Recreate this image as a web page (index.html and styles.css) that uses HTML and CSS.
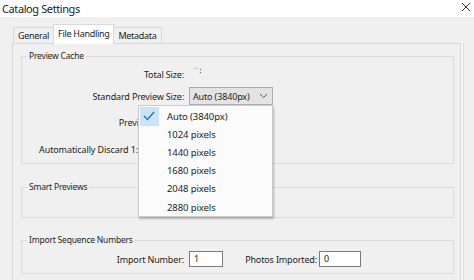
FILE: index.html
```html
<!DOCTYPE html>
<html>
<head>
<meta charset="utf-8">
<link rel="stylesheet" href="styles.css">
</head>
<body>
<div class="window">
  <div class="titlebar">
    <span class="title">Catalog Settings</span>
    <svg class="close" width="10" height="10" viewBox="0 0 10 10"><path d="M1 1 L9 9 M9 1 L1 9" stroke="#333" stroke-width="1" fill="none"/></svg>
  </div>
  <div class="tabs">
    <div class="tab">General</div>
    <div class="tab active">File Handling</div>
    <div class="tab">Metadata</div>
  </div>
  <div class="panel">
    <fieldset class="group cache">
      <legend>Preview Cache</legend>
      <div class="row r1">
        <span class="label">Total Size:</span>
        <svg class="spinner" width="10" height="8" viewBox="0 0 10 8"><circle cx="1.5" cy="1.5" r="0.7" fill="#999"/><circle cx="4" cy="1" r="0.6" fill="#bbb"/><circle cx="6.5" cy="2.5" r="0.7" fill="#777"/><circle cx="6.5" cy="5.5" r="0.7" fill="#777"/></svg>
      </div>
      <div class="row r2">
        <span class="label">Standard Preview Size:</span>
        <div class="selectwrap">
          <div class="select">
            <span>Auto (3840px)</span>
            <svg class="chev" width="9" height="6" viewBox="0 0 9 6"><path d="M1 1 L4.5 4.5 L8 1" stroke="#555" stroke-width="1" fill="none"/></svg>
          </div>
          <div class="menu">
            <div class="item checked">
              <span class="check"><svg width="19" height="19" viewBox="0 0 19 19"><path d="M4 9 L7.5 12.5 L14 5" stroke="#1f73c8" stroke-width="1.4" fill="none"/></svg></span>
              <span>Auto (3840px)</span>
            </div>
            <div class="item"><span class="check"></span><span>1024 pixels</span></div>
            <div class="item"><span class="check"></span><span>1440 pixels</span></div>
            <div class="item"><span class="check"></span><span>1680 pixels</span></div>
            <div class="item"><span class="check"></span><span>2048 pixels</span></div>
            <div class="item"><span class="check"></span><span>2880 pixels</span></div>
          </div>
        </div>
      </div>
      <div class="row r3">
        <span class="label">Preview Quality:</span>
      </div>
      <div class="row r4">
        <span class="label">Automatically Discard 1:1 Previews:</span>
      </div>
    </fieldset>
    <fieldset class="group smart">
      <legend>Smart Previews</legend>
      <div class="empty"></div>
    </fieldset>
    <fieldset class="group seq">
      <legend>Import Sequence Numbers</legend>
      <div class="row r5">
        <span class="label">Import Number:</span>
        <div class="input num">1</div>
        <span class="label2">Photos Imported:</span>
        <div class="input photos">0</div>
      </div>
    </fieldset>
  </div>
</div>
</body>
</html>
```

FILE: styles.css
```css
* { box-sizing: border-box; }
html, body { margin: 0; padding: 0; }
body {
  width: 474px;
  height: 280px;
  overflow: hidden;
  background: #f0f0f0;
  font-family: "Noto Sans", "Open Sans", sans-serif;
  font-size: 9px;
  letter-spacing: -0.15px;
  color: #1e1e1e;
}
.window { width: 474px; height: 280px; }
.titlebar {
  height: 17px;
  background: #ffffff;
  display: flex;
  justify-content: space-between;
  align-items: center;
  padding: 0 3px 0 2px;
}
.title { font-size: 11px; color: #222; line-height: 17px; letter-spacing: -0.4px; }
.close { margin-top: -3px; }
.tabs {
  height: 26px;
  display: flex;
  align-items: flex-end;
  padding-left: 13px;
}
.tab {
  height: 16px;
  line-height: 15px;
  padding: 0 4px;
  border: 1px solid #d9d9d9;
  border-bottom: none;
  background: #f0f0f0;
  letter-spacing: -0.3px;
}
.tab + .tab { margin-left: -1px; }
.tab.active {
  height: 20px;
  line-height: 17px;
  background: #ffffff;
  position: relative;
  z-index: 1;
  margin-bottom: -1px;
  padding: 0 4px;
}
.panel {
  margin-left: 12px;
  width: 449px;
  height: 240px;
  border: 1px solid #d9d9d9;
  background: #f0f0f0;
  padding: 6px 6px 0 8px;
  box-shadow: 2px 0 0 #f7f7f7, 3px 0 0 #dedede;
}
.group {
  margin: 0;
  border: 1px solid #dcdcdc;
  padding: 0;
  min-width: 0;
}
.group legend {
  margin-left: 5px;
  padding: 0 2px;
  line-height: 12px;
  height: 12px;
  font-size: 8.5px;
  letter-spacing: -0.2px;
}
.cache { height: 114px; padding-top: 3px; }
.smart { margin-top: 17px; height: 37px; }
.seq { margin-top: 16px; height: 40px; padding-top: 4px; }
.row {
  display: flex;
  align-items: center;
  height: 18px;
}
.label {
  width: 162px;
  text-align: right;
  flex: none;
  white-space: nowrap;
}
.r2 { margin-top: 4px; }
.r3 { margin-top: 8px; }
.r4 { margin-top: 9px; }
.r4 .label { letter-spacing: -0.1px; }
.spinner { margin-left: 10px; margin-top: -6px; }
.selectwrap { position: relative; margin-left: 5px; }
.select {
  width: 84px;
  height: 18px;
  border: 1px solid #adadad;
  background: #e3e3e3;
  display: flex;
  align-items: center;
  justify-content: space-between;
  padding: 0 4px 0 3px;
}
.menu {
  position: absolute;
  left: -51px;
  top: 18px;
  width: 135px;
  height: 112px;
  background: #fbfbfb;
  border: 1px solid #cccccc;
  box-shadow: 1px 2px 2px rgba(0,0,0,0.25);
  padding: 1px 1px;
  z-index: 5;
  font-size: 9.5px;
  letter-spacing: -0.1px;
}
.item {
  height: 18.2px;
  display: flex;
  align-items: center;
}
.check {
  width: 19px;
  height: 19px;
  flex: none;
  margin-right: 8px;
}
.item.checked .check { background: #cce4f7; }
.check svg { display: block; }
.empty { height: 24px; }
.input {
  height: 16px;
  border: 1px solid #7a7a7a;
  background: #ffffff;
  padding-left: 4px;
  line-height: 14px;
}
.num { width: 34px; margin-left: 5px; }
.label2 { width: 94px; text-align: right; flex: none; }
.photos { width: 42px; margin-left: 2px; }
```
